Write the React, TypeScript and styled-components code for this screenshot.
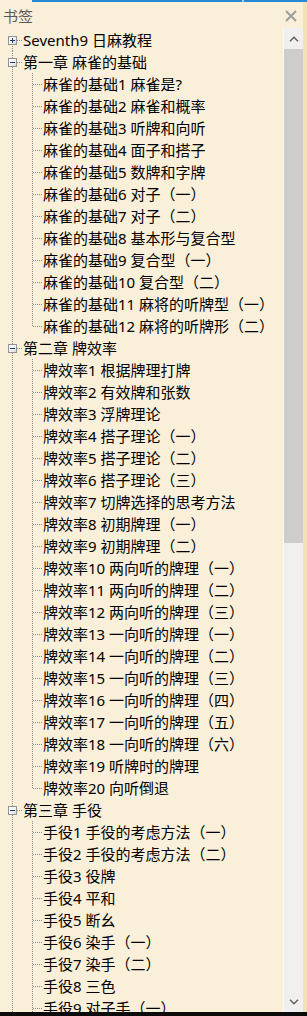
import React, { useId } from "react";
import styled, { createGlobalStyle } from "styled-components";

const Global = createGlobalStyle`
  html, body { margin: 0; padding: 0; height: 1016px; overflow: hidden; background: #faefd9; }
  #root { height: 1016px; }
`;

type TNode = { label: string; children?: TNode[]; expanded?: boolean };

const ch1 = [
  "麻雀的基础1 麻雀是?",
  "麻雀的基础2 麻雀和概率",
  "麻雀的基础3 听牌和向听",
  "麻雀的基础4 面子和搭子",
  "麻雀的基础5 数牌和字牌",
  "麻雀的基础6 对子（一）",
  "麻雀的基础7 对子（二）",
  "麻雀的基础8 基本形与复合型",
  "麻雀的基础9 复合型（一）",
  "麻雀的基础10 复合型（二）",
  "麻雀的基础11 麻将的听牌型（一）",
  "麻雀的基础12 麻将的听牌形（二）",
];
const ch2 = [
  "牌效率1 根据牌理打牌",
  "牌效率2 有效牌和张数",
  "牌效率3 浮牌理论",
  "牌效率4 搭子理论（一）",
  "牌效率5 搭子理论（二）",
  "牌效率6 搭子理论（三）",
  "牌效率7 切牌选择的思考方法",
  "牌效率8 初期牌理（一）",
  "牌效率9 初期牌理（二）",
  "牌效率10 两向听的牌理（一）",
  "牌效率11 两向听的牌理（二）",
  "牌效率12 两向听的牌理（三）",
  "牌效率13 一向听的牌理（一）",
  "牌效率14 一向听的牌理（二）",
  "牌效率15 一向听的牌理（三）",
  "牌效率16 一向听的牌理（四）",
  "牌效率17 一向听的牌理（五）",
  "牌效率18 一向听的牌理（六）",
  "牌效率19 听牌时的牌理",
  "牌效率20 向听倒退",
];
const ch3 = [
  "手役1 手役的考虑方法（一）",
  "手役2 手役的考虑方法（二）",
  "手役3 役牌",
  "手役4 平和",
  "手役5 断幺",
  "手役6 染手（一）",
  "手役7 染手（二）",
  "手役8 三色",
  "手役9 对子手（一）",
  "手役10 对子手（二）",
];

const leaf = (label: string): TNode => ({ label });

const roots: TNode[] = [
  { label: "Seventh9 日麻教程", children: [leaf("序")], expanded: false },
  { label: "第一章 麻雀的基础", children: ch1.map(leaf), expanded: true },
  { label: "第二章 牌效率", children: ch2.map(leaf), expanded: true },
  { label: "第三章 手役", children: ch3.map(leaf), expanded: true },
  { label: "第四章 防守", children: [leaf("防守1")], expanded: false },
];

type Conn = "none" | "pipe" | "tee" | "ell" | "first";
type FlatRow = { label: string; cells: Conn[]; box?: "plus" | "minus" };

function flatten(nodes: TNode[], prefix: Conn[], isRoot: boolean): FlatRow[] {
  const out: FlatRow[] = [];
  nodes.forEach((n, i) => {
    const last = i === nodes.length - 1;
    const own: Conn = isRoot && i === 0 ? "first" : last ? "ell" : "tee";
    const hasKids = !!n.children && n.children.length > 0;
    out.push({
      label: n.label,
      cells: [...prefix, own],
      box: hasKids ? (n.expanded ? "minus" : "plus") : undefined,
    });
    if (hasKids && n.expanded) {
      out.push(...flatten(n.children!, [...prefix, last ? "none" : "pipe"], false));
    }
  });
  return out;
}

const rows = flatten(roots, [], true);

const Page = styled.div`
  width: 307px;
  height: 1016px;
  display: flex;
  flex-direction: column;
  background: #faefd9;
  font-family: "Noto Sans", "Noto Sans CJK SC", sans-serif;
`;

const TopBar = styled.div`
  height: 2px;
  display: flex;
  flex: none;
`;

const TopSeg = styled.div<{ $w?: number; $tone: "blank" | "tab" | "split" }>`
  ${(p) => (p.$w ? `width: ${p.$w}px; flex: none;` : "flex: 1;")}
  background: ${(p) =>
    p.$tone === "blank" ? "#faefd9" : p.$tone === "tab" ? "#2788d6" : "#a9cbe9"};
`;

const Main = styled.div`
  flex: 1;
  display: flex;
  min-height: 0;
`;

const Panel = styled.div`
  width: 303px;
  flex: none;
  display: flex;
  flex-direction: column;
`;

const EdgeStrip = styled.div`
  flex: 1;
  background: #f5e0b8;
`;

const BottomBar = styled.div`
  height: 4px;
  flex: none;
  background: #0b0b0b;
`;

const Header = styled.div`
  height: 26px;
  flex: none;
  box-sizing: border-box;
  padding: 2px 6px 0 3px;
  display: flex;
  align-items: center;
  justify-content: space-between;
`;

const Title = styled.span`
  font-family: "Noto Sans CJK SC", sans-serif;
  font-size: 15px;
  line-height: 24px;
  color: #5a5a5a;
`;

const Body = styled.div`
  flex: 1;
  display: flex;
  min-height: 0;
`;

const Tree = styled.div`
  flex: 1;
  overflow: hidden;
  padding: 1px 0 0 2px;
  display: flex;
  flex-direction: column;
`;

const Row = styled.div`
  display: flex;
  height: 22px;
  flex: none;
`;

const Cell = styled.svg`
  width: 20px;
  height: 22px;
  flex: none;
  display: block;
`;

const Label = styled.span`
  padding-left: 1px;
  font-size: 15px;
  line-height: 22px;
  color: #000;
  white-space: nowrap;
`;

const Scrollbar = styled.div`
  width: 19px;
  flex: none;
  border-left: 1px solid #fdf9f1;
  background: #f0f0f0;
  display: flex;
  flex-direction: column;
`;

const ScrollButton = styled.div`
  height: 21px;
  flex: none;
  display: flex;
  align-items: center;
  justify-content: center;
  background: #f0f0f0;
`;

const Thumb = styled.div`
  height: 494px;
  flex: none;
  background: #cdcdcd;
`;

const Track = styled.div`
  flex: 1;
  background: #f0f0f0;
`;

const dot = "1 1";
const lineColor = "#8c8c8c";

function Connector({ conn, box }: { conn: Conn; box?: "plus" | "minus" }) {
  const gid = useId().replace(/:/g, "");
  const showH = conn === "tee" || conn === "ell" || conn === "first";
  let y1 = 0;
  let y2 = 22;
  if (conn === "ell") y2 = 11;
  if (conn === "first") y1 = 11;
  return (
    <Cell viewBox="0 0 20 22" shapeRendering="crispEdges">
      {conn !== "none" && (
        <line x1={10.5} y1={y1} x2={10.5} y2={y2} stroke={lineColor} strokeDasharray={dot} />
      )}
      {showH && (
        <line x1={11} y1={11.5} x2={20} y2={11.5} stroke={lineColor} strokeDasharray={dot} />
      )}
      {box && (
        <>
          <defs>
            <linearGradient id={gid} x1="0" y1="0" x2="1" y2="1">
              <stop offset="0" stopColor="#ffffff" />
              <stop offset="0.55" stopColor="#f3f3f3" />
              <stop offset="1" stopColor="#cfcfcf" />
            </linearGradient>
          </defs>
          <rect x={6.5} y={7.5} width={8} height={8} fill={`url(#${gid})`} stroke="#939393" />
          <line x1={8} y1={11.5} x2={13} y2={11.5} stroke="#1c3c78" />
          {box === "plus" && <line x1={10.5} y1={9} x2={10.5} y2={14} stroke="#1c3c78" />}
        </>
      )}
    </Cell>
  );
}

export default function App() {
  return (
    <>
      <Global />
      <Page>
        <TopBar>
          <TopSeg $w={32} $tone="blank" />
          <TopSeg $w={210} $tone="tab" />
          <TopSeg $w={2} $tone="split" />
          <TopSeg $tone="tab" />
        </TopBar>
        <Main>
          <Panel>
            <Header>
              <Title>书签</Title>
              <svg width="12" height="12" viewBox="0 0 12 12">
                <path d="M1 1 L11 11 M11 1 L1 11" stroke="#9c9c9c" strokeWidth="1.9" fill="none" />
              </svg>
            </Header>
            <Body>
              <Tree>
                {rows.map((r, i) => (
                  <Row key={i}>
                    {r.cells.map((c, j) => (
                      <Connector
                        key={j}
                        conn={c}
                        box={j === r.cells.length - 1 ? r.box : undefined}
                      />
                    ))}
                    <Label>{r.label}</Label>
                  </Row>
                ))}
              </Tree>
              <Scrollbar>
                <ScrollButton>
                  <svg width="10" height="6" viewBox="0 0 10 6">
                    <path d="M1 5.2 L5 1.2 L9 5.2" stroke="#5f5f5f" strokeWidth="1.5" fill="none" />
                  </svg>
                </ScrollButton>
                <Thumb />
                <Track />
                <ScrollButton>
                  <svg width="10" height="6" viewBox="0 0 10 6">
                    <path d="M1 0.8 L5 4.8 L9 0.8" stroke="#5f5f5f" strokeWidth="1.5" fill="none" />
                  </svg>
                </ScrollButton>
              </Scrollbar>
            </Body>
          </Panel>
          <EdgeStrip />
        </Main>
        <BottomBar />
      </Page>
    </>
  );
}
